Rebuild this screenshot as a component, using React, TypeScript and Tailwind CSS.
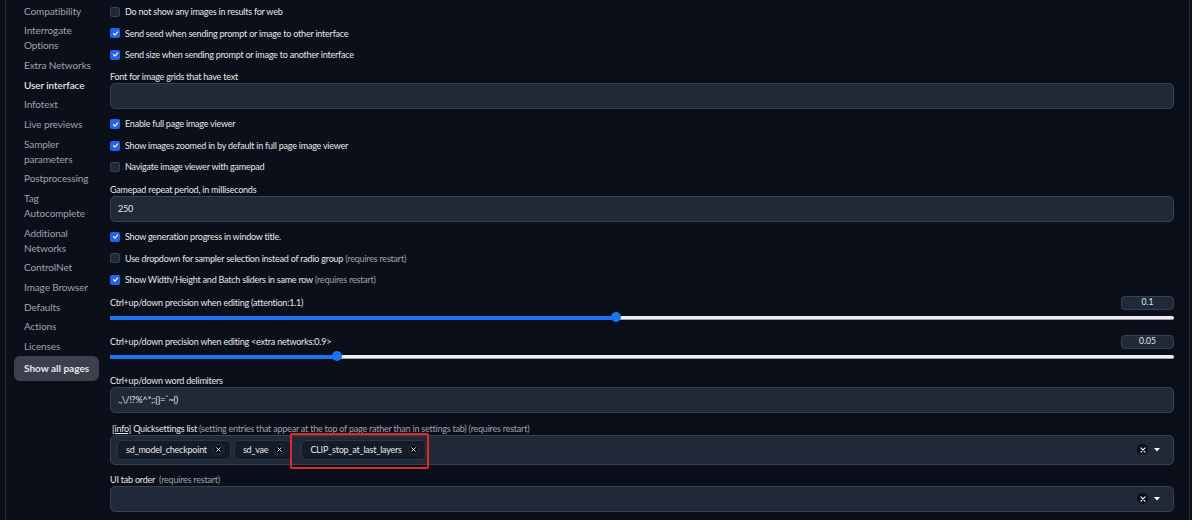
import React from "react";

const font = { fontFamily: 'Lato, "Noto Sans", sans-serif' };

function Check({ checked }: { checked: boolean }) {
  return checked ? (
    <span className="w-[10px] h-[10px] rounded-[2px] bg-[#2563eb] flex items-center justify-center shrink-0">
      <svg width="7" height="7" viewBox="0 0 10 10">
        <path d="M2 5.2 L4.2 7.3 L8.2 2.8" stroke="white" strokeWidth="1.6" fill="none" strokeLinecap="round" strokeLinejoin="round" />
      </svg>
    </span>
  ) : (
    <span className="w-[10px] h-[10px] rounded-[2px] bg-[#1f2937] border border-[#374151] shrink-0" />
  );
}

const txt = "text-[9px] tracking-[-0.22px]";

function Row({ checked, text, note }: { checked: boolean; text: string; note?: string }) {
  return (
    <div className={`flex items-center h-[21.5px] gap-[5px] ${txt} text-[#e5e7eb]`}>
      <Check checked={checked} />
      <span>
        {text}
        {note && <span className="text-[#9ca3af]"> {note}</span>}
      </span>
    </div>
  );
}

function Label({ children, mt }: { children: React.ReactNode; mt: string }) {
  return <div className={`h-[13px] leading-[13px] ${txt} text-[#e5e7eb] ${mt}`}>{children}</div>;
}

function Box({ children, h }: { children?: React.ReactNode; h: string }) {
  return (
    <div className={`${h} bg-[#1f2937] border border-[#374151] rounded-[5px] flex items-center px-[7px] ${txt} text-[#e5e7eb]`}>
      {children}
    </div>
  );
}

function Slider({ label, value, pct, mt }: { label: string; value: string; pct: number; mt: string }) {
  return (
    <div className={mt}>
      <div className="h-[16px] flex items-center justify-between">
        <span className={`${txt} text-[#e5e7eb]`}>{label}</span>
        <span className="w-[53px] h-[14px] bg-[#1f2937] border border-[#374151] rounded-[4px] text-[8.5px] text-[#e5e7eb] flex items-center justify-center">
          {value}
        </span>
      </div>
      <div className="h-[14px] flex items-center">
        <div className="relative w-full h-[4px] rounded-full bg-[#eceef1] border-b border-[#9ca3af]">
          <div className="absolute left-0 top-0 h-[4px] rounded-full bg-[#1a73f0]" style={{ width: `${pct}%` }} />
          <div
            className="absolute top-1/2 w-[10px] h-[10px] rounded-full bg-[#1a73f0] -translate-x-1/2 -translate-y-1/2"
            style={{ left: `${pct}%` }}
          />
        </div>
      </div>
    </div>
  );
}

function XCircle({ size = 10 }: { size?: number }) {
  return (
    <span
      className="rounded-full bg-[#0b0f19] border border-[#2b3544] flex items-center justify-center shrink-0"
      style={{ width: size, height: size }}
    >
      <svg width="5" height="5" viewBox="0 0 10 10">
        <path d="M1.5 1.5 L8.5 8.5 M8.5 1.5 L1.5 8.5" stroke="white" strokeWidth="1.8" strokeLinecap="round" />
      </svg>
    </span>
  );
}

function Chip({ text }: { text: string }) {
  return (
    <div className={`h-[20px] flex items-center gap-[6px] pl-[8px] pr-[6px] bg-[#151b27] border border-[#2b3544] rounded-[5px] ${txt} text-[#e5e7eb]`}>
      <span>{text}</span>
      <XCircle size={11} />
    </div>
  );
}

function DropdownRight() {
  return (
    <div className="ml-auto flex items-center gap-[6px] pr-[13px]">
      <span className="w-[11px] h-[11px] rounded-full bg-[#0b0f19] flex items-center justify-center">
        <svg width="6" height="6" viewBox="0 0 10 10">
          <path d="M1.5 1.5 L8.5 8.5 M8.5 1.5 L1.5 8.5" stroke="white" strokeWidth="1.8" strokeLinecap="round" />
        </svg>
      </span>
      <svg width="6" height="4" viewBox="0 0 6 4">
        <path d="M0 0 H6 L3 3.5 Z" fill="white" />
      </svg>
    </div>
  );
}

const sidebar: { t: string[]; active?: boolean }[] = [
  { t: ["Compatibility"] },
  { t: ["Interrogate", "Options"] },
  { t: ["Extra Networks"] },
  { t: ["User interface"], active: true },
  { t: ["Infotext"] },
  { t: ["Live previews"] },
  { t: ["Sampler", "parameters"] },
  { t: ["Postprocessing"] },
  { t: ["Tag", "Autocomplete"] },
  { t: ["Additional", "Networks"] },
  { t: ["ControlNet"] },
  { t: ["Image Browser"] },
  { t: ["Defaults"] },
  { t: ["Actions"] },
  { t: ["Licenses"] },
];

export default function App() {
  return (
    <div className="w-[1192px] h-[520px] bg-[#0b0f19] overflow-hidden" style={font}>
      <div className="ml-[5px] w-[1185px] h-full border-l border-r border-[#1f2937] flex">
        <div className="w-[104px] shrink-0 pt-[3.5px] flex flex-col gap-[4.7px]">
          {sidebar.map((s, i) => (
            <div
              key={i}
              className={`pl-[18px] text-[10px] tracking-[-0.1px] leading-[15px] ${s.active ? "text-[#eef0f3] font-medium" : "text-[#9ca3af]"}`}
            >
              {s.t.map((l, j) => (
                <div key={j}>{l}</div>
              ))}
            </div>
          ))}
          <div className="ml-[8px] mt-[-3px] w-[85px] h-[25px] rounded-[6px] bg-[#3b414c] flex items-center pl-[10px] text-[10px] font-bold text-[#e5e7eb]">
            Show all pages
          </div>
        </div>

        <div className="w-[1064px] shrink-0 pt-[1px]">
          <Row checked={false} text="Do not show any images in results for web" />
          <Row checked={true} text="Send seed when sending prompt or image to other interface" />
          <Row checked={true} text="Send size when sending prompt or image to another interface" />
          <Label mt="mt-[4.5px]">Font for image grids that have text</Label>
          <Box h="h-[26px]" />
          <div className="mt-[4.25px]">
            <Row checked={true} text="Enable full page image viewer" />
            <Row checked={true} text="Show images zoomed in by default in full page image viewer" />
            <Row checked={false} text="Navigate image viewer with gamepad" />
          </div>
          <Label mt="mt-[4.75px]">Gamepad repeat period, in milliseconds</Label>
          <Box h="h-[26px]">250</Box>
          <div className="mt-[4.5px]">
            <Row checked={true} text="Show generation progress in window title." />
            <Row checked={false} text="Use dropdown for sampler selection instead of radio group" note="(requires restart)" />
            <Row checked={true} text="Show Width/Height and Batch sliders in same row" note="(requires restart)" />
          </div>
          <Slider mt="mt-[4px]" label="Ctrl+up/down precision when editing (attention:1.1)" value="0.1" pct={47.6} />
          <Slider mt="mt-[9px]" label="Ctrl+up/down precision when editing <extra networks:0.9>" value="0.05" pct={21.3} />
          <Label mt="mt-[10px]">Ctrl+up/down word delimiters</Label>
          <Box h="h-[26px]">{".,\\/!?%^*;:{}=`~()"}</Box>
          <Label mt="mt-[9px]">
            <span className="ml-[2px] underline">[info]</span> Quicksettings list{" "}
            <span className="text-[#9ca3af]">(setting entries that appear at the top of page rather than in settings tab) (requires restart)</span>
          </Label>
          <div className="relative h-[30px] bg-[#1f2937] border border-[#374151] rounded-[5px] flex items-center pl-[6px] gap-[3px]">
            <Chip text="sd_model_checkpoint" />
            <Chip text="sd_vae" />
            <div className="ml-[6px]">
              <Chip text="CLIP_stop_at_last_layers" />
            </div>
            <div className="absolute left-[179px] top-[-3px] w-[139px] h-[36px] border-2 border-[#e0282a] rounded-[2px] pointer-events-none" />
            <DropdownRight />
          </div>
          <Label mt="mt-[8px]">
            UI tab order <span className="text-[#9ca3af]">&nbsp;(requires restart)</span>
          </Label>
          <div className="h-[26px] bg-[#1f2937] border border-[#374151] rounded-[5px] flex items-center">
            <DropdownRight />
          </div>
        </div>
      </div>
    </div>
  );
}
